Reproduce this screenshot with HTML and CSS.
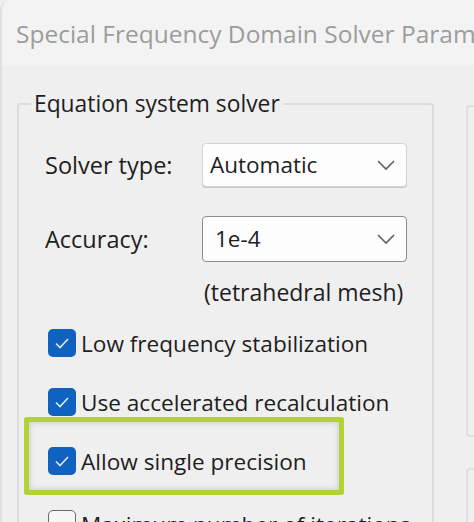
FILE: index.html
```html
<!DOCTYPE html>
<html>
<head>
<meta charset="utf-8">
<link rel="stylesheet" href="styles.css">
</head>
<body>
<div class="window">
  <div class="titlebar">Special Frequency Domain Solver Parameters</div>
  <div class="content">
    <fieldset class="group">
      <legend class="group-title">Equation system solver</legend>
      <div class="form">
        <div class="row">
          <span class="label">Solver type:</span>
          <div class="select">
            <span class="select-value">Automatic</span>
            <svg class="chevron" width="20" height="12" viewBox="0 0 20 12"><path d="M2 2 L10 10 L18 2" fill="none" stroke="#606060" stroke-width="1.6"/></svg>
          </div>
        </div>
        <div class="row row-acc">
          <span class="label">Accuracy:</span>
          <div class="select select-focus">
            <span class="select-value val-acc">1e-4</span>
            <svg class="chevron" width="20" height="12" viewBox="0 0 20 12"><path d="M2 2 L10 10 L18 2" fill="none" stroke="#606060" stroke-width="1.6"/></svg>
          </div>
        </div>
        <div class="note">(tetrahedral mesh)</div>
        <div class="checks">
          <label class="check"><span class="box checked"><svg width="28" height="28" viewBox="0 0 28 28"><path d="M8 14.5 L12 18.5 L20 10" fill="none" stroke="#dfe9f7" stroke-width="1.6"/></svg></span>Low frequency stabilization</label>
          <label class="check"><span class="box checked"><svg width="28" height="28" viewBox="0 0 28 28"><path d="M8 14.5 L12 18.5 L20 10" fill="none" stroke="#dfe9f7" stroke-width="1.6"/></svg></span>Use accelerated recalculation</label>
          <label class="check check-hl"><span class="highlight"></span><span class="box checked"><svg width="28" height="28" viewBox="0 0 28 28"><path d="M8 14.5 L12 18.5 L20 10" fill="none" stroke="#dfe9f7" stroke-width="1.6"/></svg></span>Allow single precision</label>
          <label class="check check-last"><span class="box"></span>Maximum number of iterations</label>
        </div>
      </div>
    </fieldset>
    <div class="side">
      <div class="side-box side-top"></div>
      <div class="side-box side-bottom"></div>
    </div>
  </div>
</div>
</body>
</html>
```
FILE: styles.css
```css
html, body {
  margin: 0;
  padding: 0;
}
body {
  width: 474px;
  height: 522px;
  overflow: hidden;
  background: #efefef;
  font-family: "Open Sans", "Noto Sans", sans-serif;
  color: #1e1e1e;
}
.window {
  height: 522px;
  border-left: 2px solid #e0e0e0;
  border-top-left-radius: 10px;
  box-sizing: border-box;
  overflow: hidden;
}
.titlebar {
  height: 66px;
  background: #f3f3f3;
  color: #9c9c9c;
  font-size: 24.5px;
  line-height: 24px;
  padding: 22px 0 0 14px;
  box-sizing: border-box;
  white-space: nowrap;
}
.content {
  display: flex;
  padding-top: 24px;
}
.group {
  margin: 0 0 0 15px;
  width: 417px;
  height: 500px;
  box-sizing: border-box;
  border: 2px solid #dcdcdc;
  border-radius: 3px;
  padding: 0;
  flex: none;
}
.group-title {
  font-size: 22.8px;
  line-height: 28px;
  padding: 0 3px;
  margin-left: 12px;
  color: #1e1e1e;
}
.form {
  padding: 24px 0 0 26px;
}
.row {
  display: flex;
  align-items: center;
  height: 45px;
}
.row-acc {
  margin-top: 29px;
}
.label {
  width: 157px;
  font-size: 23.5px;
}
.select {
  width: 205px;
  height: 44px;
  box-sizing: border-box;
  background: #fdfdfd;
  border: 1px solid #d4d4d4;
  border-radius: 4px;
  display: flex;
  align-items: center;
  justify-content: space-between;
  padding: 0 10px 0 7px;
  box-shadow: 0 1px 0 #c8c8c8;
}
.select-focus {
  border: 1.5px solid #8c8c8c;
  height: 46px;
  box-shadow: none;
}
.select-value {
  font-size: 22.5px;
}
.val-acc {
  padding-left: 5px;
}
.chevron {
  display: block;
}
.note {
  margin: 11px 0 0 159px;
  font-size: 23px;
  line-height: 40px;
}
.checks {
  display: flex;
  flex-direction: column;
  margin-top: 16px;
}
.check {
  position: relative;
  display: flex;
  align-items: center;
  height: 30px;
  margin-left: 3px;
  font-size: 22.6px;
  margin-bottom: 28px;
  white-space: nowrap;
}
.check + .check {
  margin-top: 1px;
}
.check-hl {
  margin-bottom: 32px;
}
.box {
  width: 28px;
  height: 28px;
  box-sizing: border-box;
  border-radius: 5px;
  border: 1.5px solid #6b6b6b;
  background: #f7f7f7;
  margin-right: 5px;
  flex: none;
}
.box.checked {
  border: none;
  background: #0f62c0;
}
.box svg {
  display: block;
}
.highlight {
  position: absolute;
  left: -24px;
  top: -29px;
  width: 320px;
  height: 78px;
  box-sizing: border-box;
  border: 5px solid #b3d335;
  border-radius: 2px;
  box-shadow: inset 0 0 6px rgba(0,0,0,0.18);
  pointer-events: none;
}
.side {
  margin-left: 32px;
  margin-top: 15px;
  flex: 1;
  display: flex;
  flex-direction: column;
}
.side-box {
  border-left: 2px solid #dedede;
  border-top: 2px solid #dedede;
  border-top-left-radius: 4px;
}
.side-top {
  height: 332px;
  border-bottom: 2px solid #dedede;
  border-bottom-left-radius: 4px;
  box-sizing: border-box;
}
.side-bottom {
  margin-top: 31px;
  flex: 1;
}
```
